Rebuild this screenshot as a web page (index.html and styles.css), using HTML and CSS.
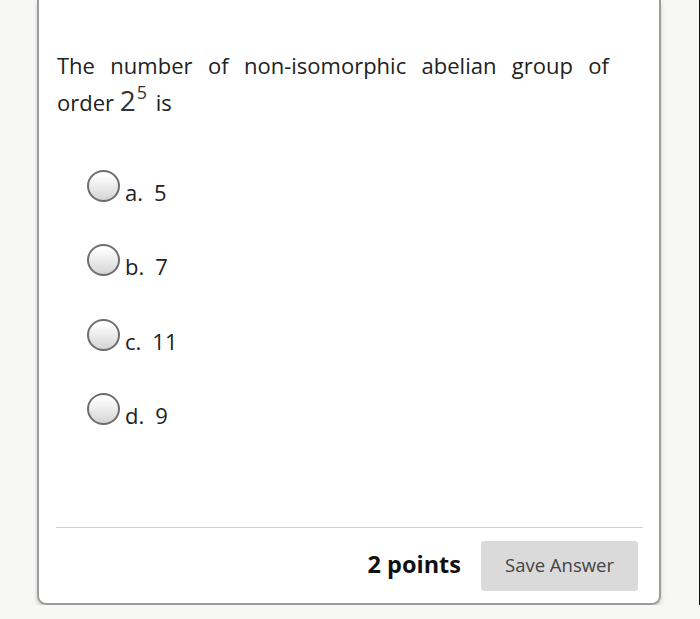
FILE: index.html
```html
<!DOCTYPE html>
<html>
<head>
<meta charset="utf-8">
<link rel="stylesheet" href="styles.css">
</head>
<body>
<div class="page">
  <div class="card">
    <p class="question">The number of non-isomorphic abelian group of order <span class="base">2</span><sup class="exp">5</sup> is</p>
    <div class="options">
      <label class="option"><span class="radio"></span><span class="letter">a.</span><span class="value">5</span></label>
      <label class="option"><span class="radio"></span><span class="letter">b.</span><span class="value">7</span></label>
      <label class="option"><span class="radio"></span><span class="letter">c.</span><span class="value">11</span></label>
      <label class="option"><span class="radio"></span><span class="letter">d.</span><span class="value">9</span></label>
    </div>
    <div class="footer">
      <div class="actions">
        <span class="points">2 points</span>
        <button class="save">Save Answer</button>
      </div>
    </div>
  </div>
</div>
</body>
</html>
```

FILE: styles.css
```css
html, body {
  margin: 0;
  padding: 0;
}
html {
  background: #f7f7f5;
}
body {
  font-family: "Open Sans", "Noto Sans", sans-serif;
  color: #222;
}
.page {
  width: 699px;
  min-height: 600px;
  border-right: 1px solid #111;
}
.card {
  margin-left: 37px;
  width: 620px;
  background: #fff;
  border: 2px solid #9c9c9c;
  border-top: none;
  border-radius: 0 0 9px 9px;
  box-shadow: 0 3px 4px rgba(0, 0, 0, 0.18);
}
.question {
  margin: 0;
  padding: 47px 50px 0 18px;
  font-size: 22px;
  line-height: 37px;
  text-align: justify;
}
.base {
  font-size: 28px;
  line-height: 0;
  color: #333;
}
.exp {
  font-size: 18px;
  line-height: 0;
  vertical-align: 12px;
  margin-left: 1px;
  margin-right: 3px;
  color: #333;
}
.options {
  display: flex;
  flex-direction: column;
  padding-top: 28px;
  padding-left: 48px;
}
.option {
  display: flex;
  align-items: center;
  height: 74.3px;
  font-size: 22px;
}
.radio {
  width: 29px;
  height: 28px;
  border: 2px solid #6e6e6e;
  border-radius: 50%;
  background: linear-gradient(#ffffff 10%, #d4d4d4);
}
.letter,
.value {
  padding-top: 12px;
}
.letter {
  margin-left: 5px;
}
.value {
  margin-left: 11px;
}
.footer {
  margin-top: 81px;
  padding: 0 16px 0 17px;
}
.actions {
  border-top: 1px solid #cfcfcf;
  display: flex;
  justify-content: flex-end;
  align-items: center;
  gap: 20px;
  padding: 13px 5px 12px 0;
}
.points {
  font-weight: 700;
  font-size: 23.5px;
  color: #111;
  padding-bottom: 5px;
}
.save {
  width: 157px;
  height: 50px;
  border: none;
  border-radius: 3px;
  background: #dadada;
  color: #444;
  font-family: "Open Sans", "Noto Sans", sans-serif;
  font-size: 18.5px;
  padding: 0 0 4px;
}
```
